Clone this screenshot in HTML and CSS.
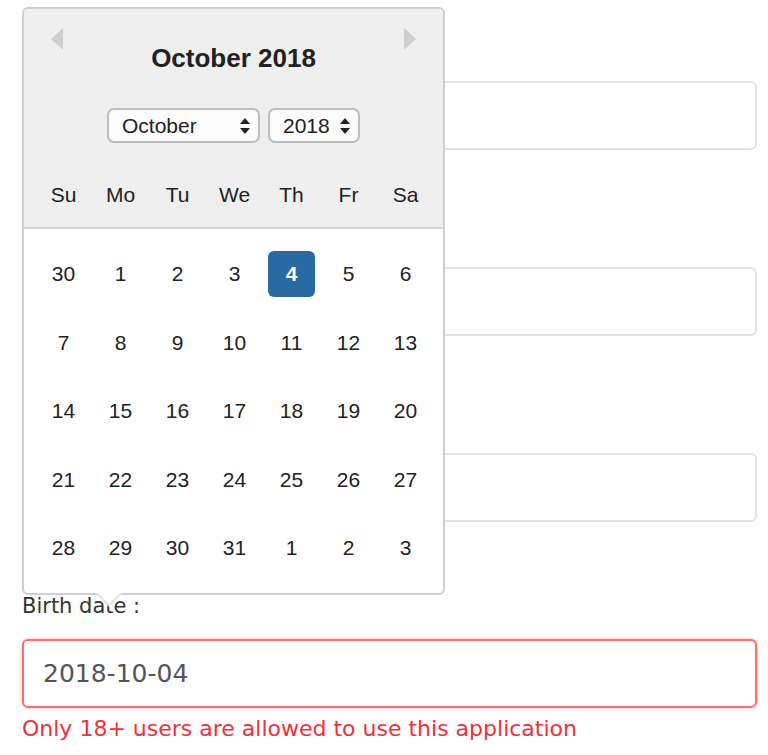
FILE: index.html
```html
<!DOCTYPE html>
<html>
<head>
<meta charset="utf-8">
<link rel="stylesheet" href="styles.css">
</head>
<body>
<form class="form">
  <div class="field">
    <label class="label">First name :</label>
    <div class="input"></div>
  </div>
  <div class="field">
    <label class="label">Last name :</label>
    <div class="input"></div>
  </div>
  <div class="field">
    <label class="label">Email :</label>
    <div class="input"></div>
  </div>
  <div class="field">
    <label class="label">Birth date :</label>
    <div class="input input-error">2018-10-04</div>
    <div class="error">Only 18+ users are allowed to use this application</div>
  </div>
</form>

<div class="picker">
  <div class="picker-head">
    <div class="nav-row">
      <svg class="nav" width="14" height="22" viewBox="0 0 14 22"><polygon points="13,0 13,22 1,11" fill="#cfcfcf"/></svg>
      <div class="title">October 2018</div>
      <svg class="nav" width="14" height="22" viewBox="0 0 14 22"><polygon points="1,0 1,22 13,11" fill="#cfcfcf"/></svg>
    </div>
    <div class="selects">
      <div class="sel sel-month"><span>October</span>
        <svg width="10" height="16" viewBox="0 0 10 16"><polygon points="5,0 10,6 0,6" fill="#222"/><polygon points="0,10 10,10 5,16" fill="#222"/></svg>
      </div>
      <div class="sel sel-year"><span>2018</span>
        <svg width="10" height="16" viewBox="0 0 10 16"><polygon points="5,0 10,6 0,6" fill="#222"/><polygon points="0,10 10,10 5,16" fill="#222"/></svg>
      </div>
    </div>
    <div class="week">
      <span>Su</span><span>Mo</span><span>Tu</span><span>We</span><span>Th</span><span>Fr</span><span>Sa</span>
    </div>
  </div>
  <div class="days">
    <span>30</span><span>1</span><span>2</span><span>3</span><span class="active"><b>4</b></span><span>5</span><span>6</span>
    <span>7</span><span>8</span><span>9</span><span>10</span><span>11</span><span>12</span><span>13</span>
    <span>14</span><span>15</span><span>16</span><span>17</span><span>18</span><span>19</span><span>20</span>
    <span>21</span><span>22</span><span>23</span><span>24</span><span>25</span><span>26</span><span>27</span>
    <span>28</span><span>29</span><span>30</span><span>31</span><span>1</span><span>2</span><span>3</span>
  </div>
  <div class="pointer"></div>
</div>
</body>
</html>
```
FILE: styles.css
```css
html, body {
  margin: 0;
  padding: 0;
  background: #fff;
}
.form {
  padding: 36px 11px 0 22px;
  font-family: "DejaVu Sans", Verdana, sans-serif;
}
.field {
  margin-bottom: 72px;
}
.field:last-child {
  margin-bottom: 0;
}
.label {
  display: block;
  font-size: 21px;
  line-height: 24px;
  color: #333;
  margin-bottom: 21px;
}
.input {
  box-sizing: border-box;
  height: 69px;
  border: 2px solid #e3e3e3;
  border-radius: 6px;
  padding: 0 19px;
  font-size: 25px;
  line-height: 65px;
  color: #555;
}
.input-error {
  border-color: #ff6b6f;
  box-shadow: 0 0 3px rgba(255, 60, 60, 0.45);
}
.error {
  margin-top: 7px;
  font-size: 22px;
  line-height: 28px;
  color: #f0303a;
}
.picker {
  position: absolute;
  left: 22px;
  top: 7px;
  width: 423px;
  height: 588px;
  box-sizing: border-box;
  border: 2px solid #cfcfcf;
  border-radius: 6px;
  background: #fff;
  font-family: "Liberation Sans", Arial, sans-serif;
  color: #222;
}
.picker-head {
  background: #efefef;
  border-radius: 5px 5px 0 0;
  border-bottom: 2px solid #d4d4d4;
  height: 220px;
  box-sizing: border-box;
  padding: 19px 26px 0 26px;
}
.nav-row {
  display: flex;
  justify-content: space-between;
  align-items: flex-start;
}
.title {
  font-weight: bold;
  font-size: 26px;
  line-height: 30px;
  margin-top: 15px;
}
.selects {
  display: flex;
  justify-content: center;
  gap: 8px;
  margin-top: 35px;
}
.sel {
  box-sizing: border-box;
  height: 35px;
  border: 2px solid #bdbdbd;
  border-radius: 7px;
  background: #fbfbfb;
  font-size: 21px;
  display: flex;
  align-items: center;
  justify-content: space-between;
  padding: 0 8px 0 13px;
}
.sel-month {
  width: 153px;
}
.sel-year {
  width: 92px;
}
.week {
  display: grid;
  grid-template-columns: repeat(7, 57px);
  margin: 38px 0 0 -15px;
  font-size: 21px;
  line-height: 28px;
  text-align: center;
}
.days {
  display: grid;
  grid-template-columns: repeat(7, 57px);
  grid-auto-rows: 68.5px;
  padding: 11px 11px 0 11px;
  font-size: 21px;
  text-align: center;
}
.days span {
  display: flex;
  align-items: center;
  justify-content: center;
}
.days .active b {
  display: flex;
  align-items: center;
  justify-content: center;
  width: 47px;
  height: 46px;
  border-radius: 6px;
  background: #2a6aa3;
  color: #fff;
  font-weight: bold;
}
.pointer {
  position: absolute;
  left: 71px;
  bottom: -14px;
  width: 0;
  height: 0;
  border-left: 14px solid transparent;
  border-right: 14px solid transparent;
  border-top: 14px solid #e2e2e2;
}
.pointer::after {
  content: "";
  position: absolute;
  left: -13px;
  top: -16px;
  width: 0;
  height: 0;
  border-left: 13px solid transparent;
  border-right: 13px solid transparent;
  border-top: 13px solid #fff;
}
```
